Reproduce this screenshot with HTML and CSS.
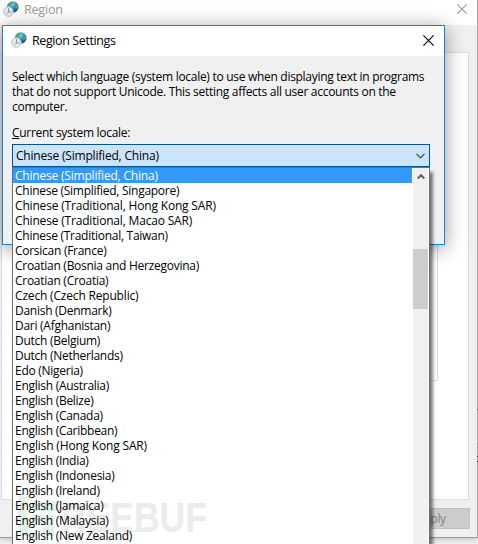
FILE: index.html
```html
<!DOCTYPE html>
<html lang="en">
<head>
<meta charset="utf-8">
<title>Region Settings</title>
<link rel="stylesheet" href="styles.css">
</head>
<body>
<svg class="defs" width="0" height="0">
  <defs>
    <radialGradient id="sea" cx="45%" cy="25%" r="75%"><stop offset="0" stop-color="#8fdcff"/><stop offset=".4" stop-color="#3a8fe0"/><stop offset="1" stop-color="#12308f"/></radialGradient>
    <symbol id="globe" viewBox="0 0 16 16">
      <circle cx="9.7" cy="6" r="5.8" fill="url(#sea)"/>
      <path d="M5 3.5 8 .8 10 1.2 8.8 3.5 6.8 4.8 5 6zM11.8 2 14.4 3.6 15 6.4 13 8.3 11.5 6.4 12.8 4.6z" fill="#4fae35"/>
      <circle cx="5.4" cy="10.6" r="4.8" fill="#e3ebef" stroke="#b3bdc3" stroke-width=".9"/>
      <path d="M5.5 7.2V11H8.5M5.5 11 4 12.6" fill="none" stroke="#7c8994" stroke-width=".9"/>
    </symbol>
  </defs>
</svg>
<div class="desktop">
  <section class="region">
    <header class="region-title">
      <svg class="icon" width="16" height="16"><use href="#globe"/></svg>
      <span>Region</span>
      <svg class="close" width="10" height="10" viewBox="0 0 10 10"><path d="M.2.2 9.8 9.8M9.8.2.2 9.8"/></svg>
    </header>
    <div class="region-body">
      <div class="page"><div class="group"></div></div>
      <button class="apply">Apply</button>
    </div>
  </section>
  <span class="edge-marks"></span>

  <section class="dialog">
    <header class="dialog-title">
      <svg class="icon" width="16" height="16"><use href="#globe"/></svg>
      <span>Region Settings</span>
      <svg class="close" width="11" height="11" viewBox="0 0 11 11"><path d="M.4.4 10.6 10.6M10.6.4.4 10.6"/></svg>
    </header>
    <div class="dialog-body">
      <p>Select which language (system locale) to use when displaying text in programs</p>
      <p>that do not support Unicode. This setting affects all user accounts on the</p>
      <p>computer.</p>
      <label><u>C</u>urrent system locale:</label>
      <div class="combo"><span>Chinese (Simplified, China)</span>
        <svg width="9" height="6" viewBox="0 0 9 6"><path d="M.5.8 4.5 4.8 8.5.8"/></svg>
      </div>
    </div>
  </section>

  <div class="list">
    <div class="watermark">
      <svg width="43" height="40" viewBox="0 0 43 40"><path d="M0 0H10V40H0zM14 5H40V15H14zM14 19H36V40H25V29H14z"/></svg>
      <span>REEBUF</span>
    </div>
    <ul>
      <li class="selected">Chinese (Simplified, China)</li>
      <li>Chinese (Simplified, Singapore)</li>
      <li class="wide">Chinese (Traditional, Hong Kong SAR)</li>
      <li class="wide">Chinese (Traditional, Macao SAR)</li>
      <li>Chinese (Traditional, Taiwan)</li>
      <li>Corsican (France)</li>
      <li>Croatian (Bosnia and Herzegovina)</li>
      <li>Croatian (Croatia)</li>
      <li class="wide">Czech (Czech Republic)</li>
      <li>Danish (Denmark)</li>
      <li>Dari (Afghanistan)</li>
      <li>Dutch (Belgium)</li>
      <li>Dutch (Netherlands)</li>
      <li>Edo (Nigeria)</li>
      <li>English (Australia)</li>
      <li>English (Belize)</li>
      <li>English (Canada)</li>
      <li>English (Caribbean)</li>
      <li class="wide">English (Hong Kong SAR)</li>
      <li>English (India)</li>
      <li>English (Indonesia)</li>
      <li>English (Ireland)</li>
      <li>English (Jamaica)</li>
      <li>English (Malaysia)</li>
      <li>English (New Zealand)</li>
    </ul>
    <div class="scrollbar">
      <svg width="8" height="7" viewBox="0 0 8 7"><path d="M.7 5.5 4 2.2 7.3 5.5"/></svg>
      <div class="thumb"></div>
    </div>
  </div>
</div>
</body>
</html>
```
FILE: styles.css
```css
* { box-sizing: border-box; margin: 0; padding: 0; }
body { font: 12px/15px "Open Sans", "Noto Sans", sans-serif; letter-spacing: -.2px; color: #000; overflow: hidden; }
.defs { position: absolute; }
.desktop { position: relative; width: 478px; height: 544px; overflow: hidden; background: #f2f2f2; }
.icon { flex: none; }
.close { margin-left: auto; fill: none; stroke: #000; stroke-width: 1.1; }

.region { width: 478px; height: 538px; display: flex; flex-direction: column; background: #f0f0f0; border-right: 1px solid #a8a8a8; border-bottom: 1px solid #9a9fa3; box-shadow: 0 1px 6px rgba(0,0,0,.25); }
.region-title { height: 25px; flex: none; display: flex; background: #fff; color: #999; font-size: 12.5px; padding: 1px 10px 0 3px; }
.region-title span { margin-left: 5px; line-height: 17px; }
.region-title .close { stroke: #999; margin-top: 3px; }
.region-body { flex: 1; display: flex; flex-direction: column; padding: 27px 8px 9px 1px; }
.page { height: 448px; width: 468px; background: #fff; border: 1px solid #dcdcdc; }
.group { width: 420px; height: 328px; margin-left: 16px; border: 1px solid #dcdcdc; border-width: 0 1px 1px 0; }
.apply { width: 75px; height: 21px; margin: 8px 0 0 394px; flex: none; background: #ccc; border: 1px solid #bfbfbf; color: #838383; font: inherit; letter-spacing: -.4px; line-height: 18px; padding-right: 3px; }
.edge-marks { position: absolute; left: 477px; top: 409px; width: 1px; height: 54px; background: linear-gradient(#555 1px, transparent 1px 38px, #777 38px 39px, transparent 39px 47px, #222 47px 48px, transparent 48px 52px, #222 52px 53px, transparent 53px); }

.dialog { position: absolute; left: 2px; top: 25px; width: 443px; height: 220px; background: #f0f0f0; border: 1px solid #1883d7; box-shadow: 0 3px 18px rgba(0,0,0,.42); }
.dialog-title { height: 30px; display: flex; background: #fff; font-size: 12.5px; letter-spacing: -.4px; padding: 6px 10px 0 8px; }
.dialog-title span { margin-left: 5px; line-height: 17px; }
.dialog-title .close { margin-top: 3px; }
.dialog-body { padding: 13px 14px 0 9px; white-space: nowrap; }
.dialog-body p, .dialog-body label { letter-spacing: -.29px; }
.dialog-body label { display: block; margin: 11px 0 4px; }
.combo { width: 418px; height: 23px; display: flex; align-items: center; justify-content: space-between; padding: 0 4px 0 3px; background: #cce4f7; border: 1px solid #005499; }
.combo svg { fill: none; stroke: #444; stroke-width: 1.2; }

.list { position: absolute; left: 12px; top: 167px; width: 418px; height: 380px; display: flex; background: #fff; border: 1px solid #6e6e6e; box-shadow: 3px 5px 3px rgba(0,0,0,.5); }
ul { list-style: none; width: 400px; flex: none; position: relative; border-right: 1px solid #fff; }
li { height: 15px; line-height: 15px; padding-left: 2px; white-space: nowrap; letter-spacing: -.27px; }
li.wide { letter-spacing: -.18px; }
.selected { background: #3399ff; color: #fff; letter-spacing: -.2px; }
.scrollbar { width: 15px; background: #f0f0f0; }
.scrollbar svg { display: block; margin: 5px 0 0 4px; fill: none; stroke: #606060; stroke-width: 2; }
.thumb { height: 60px; margin-top: 69px; background: #cdcdcd; }
.watermark { position: absolute; left: 5px; top: 328px; display: flex; }
.watermark path { fill: #e2f2ea; }
.watermark span { font: bold 42px/44px "Liberation Sans", sans-serif; letter-spacing: 0; color: #ececec; transform: scaleX(.845); transform-origin: 0 50%; }
```
